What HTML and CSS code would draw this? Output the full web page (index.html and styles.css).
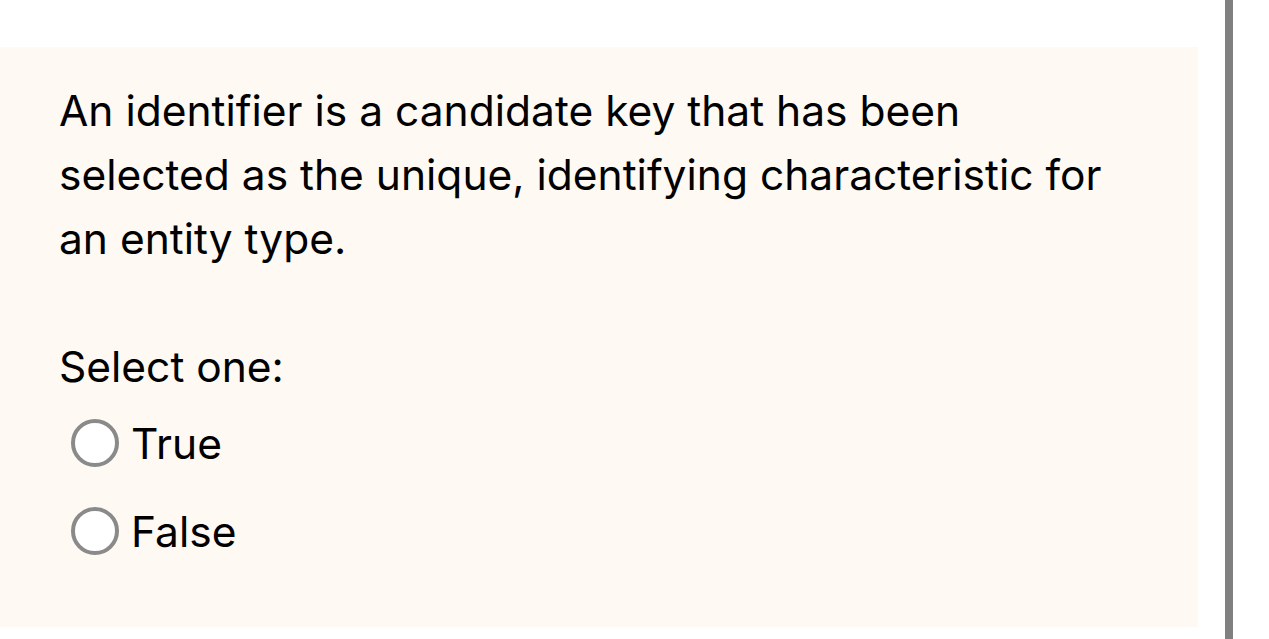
FILE: index.html
```html
<!DOCTYPE html>
<html>
<head>
<meta charset="utf-8">
<link rel="stylesheet" href="styles.css">
</head>
<body>
<div class="page">
  <div class="question">
    <p class="qtext">An identifier is a candidate key that has been selected as the unique, identifying characteristic for an entity type.</p>
    <div class="prompt">Select one:</div>
    <div class="answers">
      <label class="option"><span class="radio"></span><span class="label">True</span></label>
      <label class="option"><span class="radio"></span><span class="label">False</span></label>
    </div>
  </div>
  <div class="scrollbar"></div>
</div>
</body>
</html>
```
FILE: styles.css
```css
html, body {
  margin: 0;
  padding: 0;
  background: #ffffff;
}
body {
  font-family: Inter, "Noto Sans", sans-serif;
  color: #000;
  width: 1269px;
  height: 639px;
  overflow: hidden;
}
.page {
  display: flex;
  height: 639px;
}
.question {
  margin-top: 47px;
  width: 1198px;
  height: 580px;
  background: #fef9f2;
  box-sizing: border-box;
  padding: 32px 0 0 59px;
}
.qtext {
  margin: 0;
  font-size: 42.5px;
  line-height: 64px;
  width: 1060px;
}
.prompt {
  font-size: 42.5px;
  line-height: 64px;
  margin-top: 64px;
}
.answers {
  display: flex;
  flex-direction: column;
}
.option {
  display: flex;
  align-items: center;
  height: 88px;
  font-size: 42.5px;
}
.radio {
  width: 40px;
  height: 40px;
  border: 4px solid #8a8a8a;
  border-radius: 50%;
  background: #fff;
  margin-left: 12px;
  margin-right: 12px;
}
.scrollbar {
  margin-left: 27px;
  width: 8px;
  height: 639px;
  background: #808080;
}
```
